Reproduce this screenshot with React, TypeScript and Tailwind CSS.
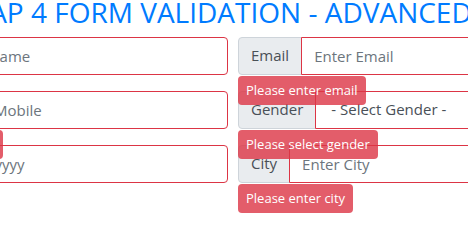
export default function App() {
  const tip =
    "absolute left-0 top-full z-10 mt-[1.6px] whitespace-nowrap rounded bg-[rgba(220,53,69,0.8)] px-2 py-1 text-[13px] leading-[21px] text-white";
  const prepend =
    "flex items-center whitespace-nowrap rounded-l border border-[#ced4da] bg-[#e9ecef] px-3 text-[15px] text-[#495057]";
  const field =
    "-ml-px h-[38px] min-w-0 flex-1 rounded-r border border-[#dc3545] bg-white px-3 text-[15px] text-[#495057] outline-none placeholder:text-[#6c757d]";

  return (
    <div className="h-[246px] w-[468px] overflow-hidden bg-white font-['Open_Sans',sans-serif]">
      <div className="ml-[-133px] w-[739px]">
        <h3 className="mt-[-4px] mb-[7px] ml-[-3px] whitespace-nowrap text-[28px] font-medium leading-[1.2] text-[#007bff]">
          BOOTSTRAP 4 FORM VALIDATION - ADVANCED
        </h3>
        <div className="flex gap-[10px]">
          <div className="flex w-[361px] flex-col gap-4">
            <div className="relative flex">
              <span className={prepend}>Name</span>
              <input className={field} placeholder="Enter Name" />
              <div className={tip}>Please enter name</div>
            </div>
            <div className="relative flex">
              <span className={prepend}>Mobile</span>
              <input className={field} placeholder="Enter Mobile" />
              <div className={tip}>Please enter mobile</div>
            </div>
            <div className="relative flex">
              <span className={prepend}>DOB</span>
              <input className={field} placeholder="dd/mm/yyyy" />
              <div className={tip}>Please enter dob</div>
            </div>
          </div>
          <div className="flex w-[368px] flex-col gap-4">
            <div className="relative flex">
              <span className={prepend}>Email</span>
              <input className={field} placeholder="Enter Email" />
              <div className={tip}>Please enter email</div>
            </div>
            <div className="relative flex">
              <span className={prepend}>Gender</span>
              <select className={field + " appearance-none pl-[15px]"} defaultValue="">
                <option value="">- Select Gender -</option>
                <option value="m">Male</option>
                <option value="f">Female</option>
              </select>
              <div className={tip}>Please select gender</div>
            </div>
            <div className="relative flex">
              <span className={prepend}>City</span>
              <input className={field} placeholder="Enter City" />
              <div className={tip}>Please enter city</div>
            </div>
          </div>
        </div>
      </div>
    </div>
  );
}
